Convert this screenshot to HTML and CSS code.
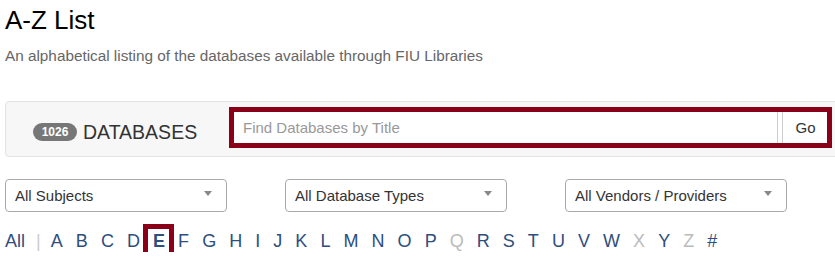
FILE: index.html
```html
<!DOCTYPE html>
<html lang="en">
<head>
<meta charset="utf-8">
<title>A-Z List</title>
<link rel="stylesheet" href="styles.css">
</head>
<body>
<div class="page">
  <h1 class="title">A-Z List</h1>
  <p class="lead">An alphabetical listing of the databases available through FIU Libraries</p>

  <div class="panel">
    <div class="count">
      <span class="badge">1026</span>
      <span class="count-label">DATABASES</span>
    </div>
    <div class="search">
      <div class="search-input">Find Databases by Title</div>
      <div class="search-gap"></div>
      <div class="search-btn">Go</div>
    </div>
  </div>

  <div class="filters">
    <div class="select"><span>All Subjects</span><span class="caret"></span></div>
    <div class="select"><span>All Database Types</span><span class="caret"></span></div>
    <div class="select"><span>All Vendors / Providers</span><span class="caret"></span></div>
  </div>

  <div class="letters">
    <a class="letter">All</a>
    <span class="sep">|</span>
    <a class="letter">A</a>
    <a class="letter">B</a>
    <a class="letter">C</a>
    <a class="letter">D</a>
    <a class="letter active">E</a>
    <a class="letter">F</a>
    <a class="letter">G</a>
    <a class="letter">H</a>
    <a class="letter">I</a>
    <a class="letter">J</a>
    <a class="letter">K</a>
    <a class="letter">L</a>
    <a class="letter">M</a>
    <a class="letter">N</a>
    <a class="letter">O</a>
    <a class="letter">P</a>
    <span class="letter disabled">Q</span>
    <a class="letter">R</a>
    <a class="letter">S</a>
    <a class="letter">T</a>
    <a class="letter">U</a>
    <a class="letter">V</a>
    <a class="letter">W</a>
    <span class="letter disabled">X</span>
    <a class="letter">Y</a>
    <span class="letter disabled">Z</span>
    <a class="letter">#</a>
  </div>
</div>
</body>
</html>
```

FILE: styles.css
```css
html, body {
  margin: 0;
  padding: 0;
  overflow: hidden;
  background: #fff;
}

body {
  font-family: "Liberation Sans", Arial, sans-serif;
  color: #333;
}

.page {
  width: 845px;
  padding: 0 0 0 5px;
}

.title {
  margin: 5px 0 0;
  font-size: 26px;
  line-height: 30px;
  font-weight: normal;
  color: #000;
}

.lead {
  margin: 11px 0 0;
  font-size: 15.3px;
  line-height: 20px;
  color: #666;
}

.panel {
  margin-top: 35px;
  display: flex;
  align-items: center;
  border: 1px solid #e3e3e3;
  border-radius: 4px;
  background: #f7f7f7;
  padding: 5px 0 8px;
}

.count {
  flex: 0 0 196px;
  padding-left: 27px;
  margin-top: 8px;
  display: flex;
  align-items: center;
  gap: 6px;
}

.badge {
  display: inline-block;
  width: 44px;
  height: 18px;
  line-height: 18px;
  border-radius: 9px;
  background: #777;
  color: #fff;
  font-size: 12px;
  font-weight: bold;
  text-align: center;
}

.count-label {
  font-size: 19.5px;
  line-height: 22px;
  color: #333;
}

.search {
  width: 593px;
  display: flex;
  border: 5px solid #8a0019;
  background: #fff;
}

.search-input {
  flex: 0 0 534px;
  height: 31px;
  line-height: 31px;
  padding-left: 9px;
  border-right: 1px solid #ccc;
  font-size: 15px;
  color: #999;
}

.search-gap {
  flex: 0 0 4px;
}

.search-btn {
  flex: 0 0 45px;
  height: 31px;
  line-height: 31px;
  border-left: 1px solid #ccc;
  text-align: center;
  font-size: 15px;
  color: #333;
}

.filters {
  margin-top: 22px;
  display: grid;
  grid-template-columns: 222px 222px 222px;
  column-gap: 58px;
}

.select {
  height: 31px;
  border: 1px solid #aaa;
  border-radius: 4px;
  background: #fff;
  display: flex;
  align-items: center;
  justify-content: space-between;
  padding: 0 14px 0 9px;
  font-size: 15px;
  color: #333;
}

.caret {
  width: 0;
  height: 0;
  border-left: 4px solid transparent;
  border-right: 4px solid transparent;
  border-top: 5px solid #888;
  margin-top: -4px;
}

.letters {
  margin-top: 18px;
  display: flex;
  align-items: baseline;
  gap: 13.05px;
  font-size: 18px;
  line-height: 22px;
}

.letter {
  display: block;
  height: 22px;
  color: #2d4e7e;
  text-decoration: none;
}

.letter.disabled {
  color: #bbb;
}

.letter.active {
  position: relative;
  font-weight: bold;
}

.letter.active::after {
  content: "";
  position: absolute;
  top: -6px;
  bottom: -6px;
  left: -10px;
  right: -9px;
  border: 5px solid #8a0019;
}

.sep {
  color: #ccc;
  margin: 0 -3px 0 -2px;
}
```
